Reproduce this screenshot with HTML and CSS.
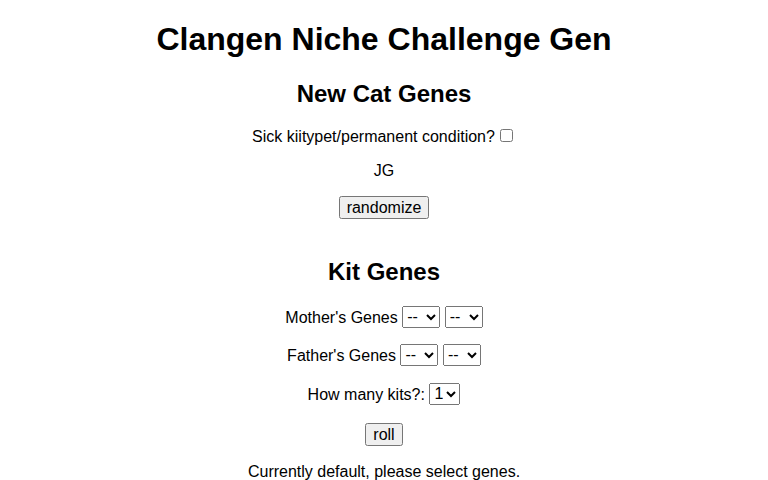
FILE: index.html
```html
<!DOCTYPE html>
<html>
<head>
<meta charset="utf-8">
<link rel="stylesheet" href="styles.css">
</head>
<body>
<h1>Clangen Niche Challenge Gen</h1>
<h2 class="section-title first">New Cat Genes</h2>
<p>Sick kiitypet/permanent condition?<input type="checkbox" class="check"></p>
<p>JG</p>
<p><button>randomize</button></p>
<h2 class="section-title second">Kit Genes</h2>
<p>Mother's Genes <select class="gene"><option>--</option></select> <select class="gene"><option>--</option></select></p>
<p>Father's Genes <select class="gene"><option>--</option></select> <select class="gene"><option>--</option></select></p>
<p class="kits-row">How many kits?: <select class="count"><option>1</option></select></p>
<p class="roll-row"><button>roll</button></p>
<p class="status">Currently default, please select genes.</p>
</body>
</html>
```
FILE: styles.css
```css
body {
  margin: 0;
  font-family: "Liberation Sans", Arial, sans-serif;
  text-align: center;
}
button, select {
  font-family: "Liberation Sans", Arial, sans-serif;
  font-size: 16px;
}
button {
  height: 23px;
}
.section-title.first {
  margin-bottom: 18px;
}
.section-title.second {
  margin-top: 39px;
}
.check {
  margin: 3px 3px 3px 5px;
}
.gene {
  width: 38px;
  height: 22px;
}
.count {
  height: 22px;
}
.kits-row {
  margin-top: 17px;
}
.roll-row {
  margin-top: 18px;
}
.status {
  margin-top: 17px;
}
```
